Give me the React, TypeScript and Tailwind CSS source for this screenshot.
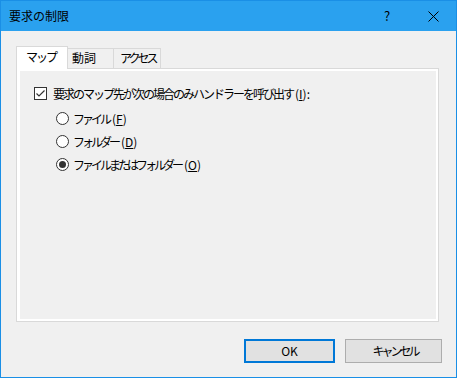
import React from "react";

const font = {
  fontFamily: '"Noto Sans CJK JP", "Noto Sans", sans-serif',
};

function Check() {
  return (
    <span className="w-[13px] h-[13px] border border-[#333333] bg-white flex items-center justify-center shrink-0">
      <svg width="11" height="11" viewBox="0 0 11 11">
        <polyline points="1.5,5.5 4,8 9.5,2.5" fill="none" stroke="#333" strokeWidth="1.2" />
      </svg>
    </span>
  );
}

function Radio({ on }: { on?: boolean }) {
  return (
    <span className="w-[13px] h-[13px] rounded-full border border-[#333333] bg-white flex items-center justify-center shrink-0">
      {on && <span className="w-[7px] h-[7px] rounded-full bg-[#333333]" />}
    </span>
  );
}

export default function App() {
  const radios = [
    { label: "ファイル", key: "F" },
    { label: "フォルダー", key: "D" },
    { label: "ファイルまたはフォルダー", key: "O", on: true },
  ];

  return (
    <div
      style={font}
      className="w-[457px] h-[378px] flex flex-col bg-[#f0f0f0] border border-[#1a8fe6] text-[12px] text-black overflow-hidden"
    >
      {/* title bar */}
      <div className="h-[30px] bg-[#2aa1ef] flex items-center shrink-0">
        <span className="pl-[8px] text-[12px]">要求の制限</span>
        <div className="ml-auto flex h-full">
          <span className="w-[46px] flex items-center justify-center text-[13px]">?</span>
          <span className="w-[46px] flex items-center justify-center">
            <svg width="11" height="11" viewBox="0 0 11 11">
              <path d="M0.5 0.5 L10.5 10.5 M10.5 0.5 L0.5 10.5" stroke="#000" strokeWidth="1" />
            </svg>
          </span>
        </div>
      </div>

      <div className="pt-[15px] pl-[15px] flex flex-col">
        {/* tabs */}
        <div className="flex items-end h-[22px]">
          <div className="w-[52px] h-[23px] bg-white border border-b-0 border-[#d9d9d9] relative z-10 -mb-[1px] pl-[9px] pt-[2px] leading-[16px] whitespace-nowrap tracking-[-2px]">
            マップ
          </div>
          <div className="w-[46px] h-[20px] border-t border-r border-[#d9d9d9] pl-[4px] leading-[18px] whitespace-nowrap">
            動詞
          </div>
          <div className="w-[47px] h-[20px] border-t border-r border-[#d9d9d9] pl-[6px] leading-[18px] whitespace-nowrap tracking-[-3px]">
            アクセス
          </div>
        </div>

        {/* panel */}
        <div className="w-[423px] h-[254px] border border-[#d9d9d9] bg-white pt-[2px] pr-[2px] pb-[2px] pl-[3px] flex">
          <div className="flex-1 bg-[#f0f0f0] pl-[14px] pt-[16px] flex flex-col">
            <div className="flex items-center h-[13px] gap-[6px]">
              <Check />
              <span className="whitespace-nowrap">
                <span className="tracking-[-2px]">要求のマップ先が次の場合のみハンドラーを呼び出す</span>
                <span className="ml-[2px]">(<span className="underline">I</span>):</span>
              </span>
            </div>
            <div className="flex flex-col pl-[22px] mt-[7px]">
              {radios.map((r) => (
                <div key={r.key} className="flex items-center h-[23px] gap-[4px]">
                  <Radio on={r.on} />
                  <span className="whitespace-nowrap">
                    <span className="tracking-[-3px]">{r.label}</span>
                    <span className="ml-[3px]">(<span className="underline">{r.key}</span>)</span>
                  </span>
                </div>
              ))}
            </div>
          </div>
        </div>
      </div>

      {/* buttons */}
      <div className="flex justify-end gap-[10px] pr-[14px] mt-[17px]">
        <button className="w-[91px] h-[24px] bg-[#e1e1e1] border-2 border-[#0078d7] leading-none">
          OK
        </button>
        <button className="w-[97px] h-[24px] bg-[#e1e1e1] border border-[#adadad] leading-none tracking-[-3px] pl-[3px]">
          キャンセル
        </button>
      </div>
    </div>
  );
}
